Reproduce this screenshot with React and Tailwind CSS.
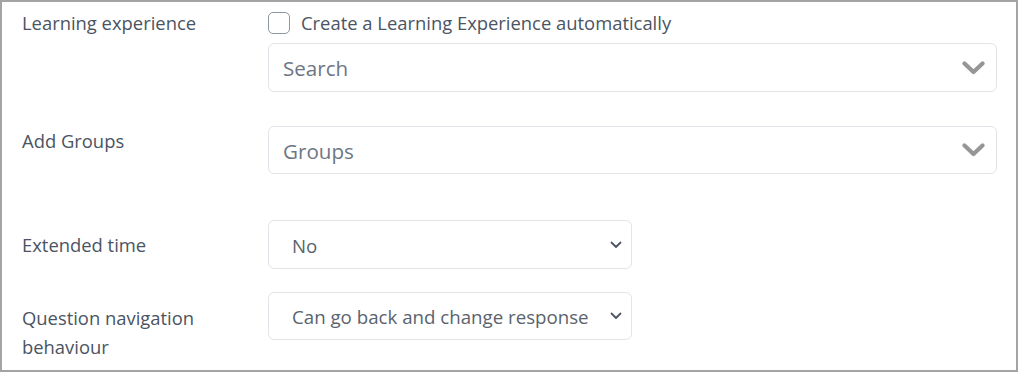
import React from "react";

function BigChevron() {
  return (
    <svg width="23" height="14" viewBox="0 0 23 14" className="shrink-0">
      <polyline points="2.5,2.5 11.5,11 20.5,2.5" fill="none" stroke="#969696" strokeWidth="4.2" strokeLinecap="round" strokeLinejoin="round" />
    </svg>
  );
}

function SmallChevron() {
  return (
    <svg width="12" height="8" viewBox="0 0 12 8" className="shrink-0">
      <polyline points="1.5,1.5 6,6 10.5,1.5" fill="none" stroke="#4e5661" strokeWidth="1.8" strokeLinecap="round" strokeLinejoin="round" />
    </svg>
  );
}

export default function App() {
  const font = { fontFamily: '"Open Sans", "Noto Sans", sans-serif' };
  return (
    <div className="w-[1018px] h-[372px] border-2 border-[#a4a4a4] bg-white pt-[6px]" style={font}>
      {/* Row 1 */}
      <div className="flex">
        <div className="w-[266px] pl-[20px] text-[18.4px] leading-[29px] text-[#4a5462]">Learning experience</div>
        <div className="w-[729px]">
          <div className="h-[29px] flex items-center gap-[11px]">
            <div className="w-[22px] h-[22px] rounded-[5px] border border-[#8f96a0] bg-white" />
            <span className="text-[18.4px] text-[#4a5462]">Create a Learning Experience automatically</span>
          </div>
          <div className="mt-[6px] h-[49px] rounded-[6px] border border-[#e1e4e8] flex items-center justify-between pl-[14px] pr-[11px]">
            <span className="text-[20.6px] text-[#6d7683] pt-[2px]">Search</span>
            <BigChevron />
          </div>
        </div>
      </div>
      {/* Row 2 */}
      <div className="flex mt-[34px]">
        <div className="w-[266px] pl-[20px] text-[18.4px] leading-[29px] text-[#4a5462]">Add Groups</div>
        <div className="w-[729px] h-[48px] rounded-[6px] border border-[#e1e4e8] flex items-center justify-between pl-[14px] pr-[11px]">
          <span className="text-[20.6px] text-[#6d7683] pt-[2px]">Groups</span>
          <BigChevron />
        </div>
      </div>
      {/* Row 3 */}
      <div className="flex mt-[46px]">
        <div className="w-[266px] pl-[20px] pt-[10px] text-[18.4px] leading-[29px] text-[#4a5462]">Extended time</div>
        <div className="w-[364px] h-[49px] rounded-[6px] border border-[#e1e4e8] flex items-center justify-between pl-[23px] pr-[9px]">
          <span className="text-[18.7px] text-[#5a636e] pt-[3px]">No</span>
          <SmallChevron />
        </div>
      </div>
      {/* Row 4 */}
      <div className="flex mt-[23px]">
        <div className="w-[266px] pl-[20px] pt-[11px] text-[18.4px] leading-[29px] text-[#4a5462]">
          Question navigation
          <br />
          behaviour
        </div>
        <div className="w-[364px] h-[48px] rounded-[6px] border border-[#e1e4e8] flex items-center justify-between pl-[23px] pr-[9px]">
          <span className="text-[18.7px] text-[#5a636e] pt-[2px]">Can go back and change response</span>
          <SmallChevron />
        </div>
      </div>
    </div>
  );
}
